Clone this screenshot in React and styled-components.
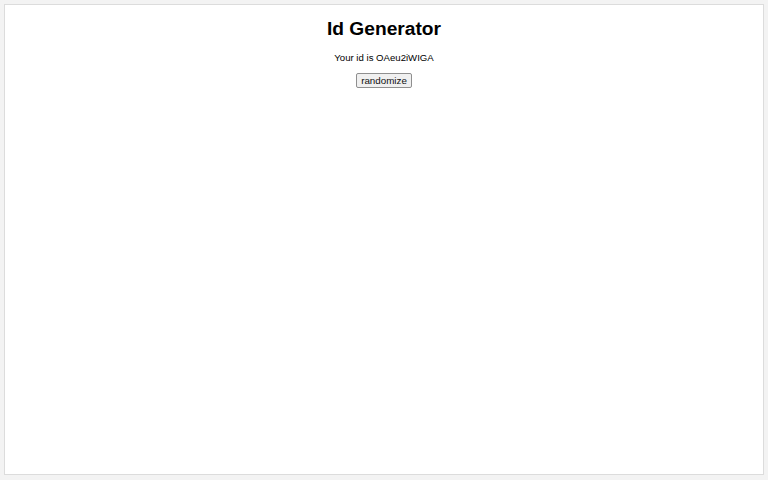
import { useState } from "react";
import styled, { createGlobalStyle } from "styled-components";

const GlobalStyle = createGlobalStyle`
    html, body {
        margin: 0;
        padding: 0;
        background-color: #f3f3f3;
    }
    * {
        box-sizing: border-box;
    }
`;

const chars = "ABCDEFGHIJKLMNOPQRSTUVWXYZabcdefghijklmnopqrstuvwxyz0123456789";

function makeId() {
    let id = "";
    for (let i = 0; i < 10; i++) {
        id += chars[Math.floor(Math.random() * chars.length)];
    }
    return id;
}

export default function App() {
    const [id, setId] = useState("OAeu2iWIGA");

    return (
        <>
            <GlobalStyle />
            <Frame>
                <Card>
                    <Title>Id Generator</Title>
                    <IdText>Your id is {id}</IdText>
                    <RandomButton onClick={() => setId(makeId())}>randomize</RandomButton>
                </Card>
            </Frame>
        </>
    );
}

const Frame = styled.div`
    width: 768px;
    height: 480px;
    padding: 4px 4px 5px 4px;
`;

const Card = styled.div`
    height: 100%;
    background-color: #ffffff;
    border: 1px solid #dcdcdc;
    display: flex;
    flex-direction: column;
    align-items: center;
    font-family: "Liberation Sans", Arial, sans-serif;
    color: #000;
`;

const Title = styled.h1`
    font-size: 19.2px;
    font-weight: bold;
    margin: 13px 0 0 0;
`;

const IdText = styled.p`
    font-size: 9.6px;
    margin: 12px 0 0 0;
`;

const RandomButton = styled.button`
    font-family: "Liberation Sans", Arial, sans-serif;
    font-size: 9.8px;
    margin-top: 10px;
    padding: 1px 4px;
    background-color: #f0f0f0;
    border: 1px solid #8f8f8f;
    border-radius: 2px;
    color: #111;
`;
